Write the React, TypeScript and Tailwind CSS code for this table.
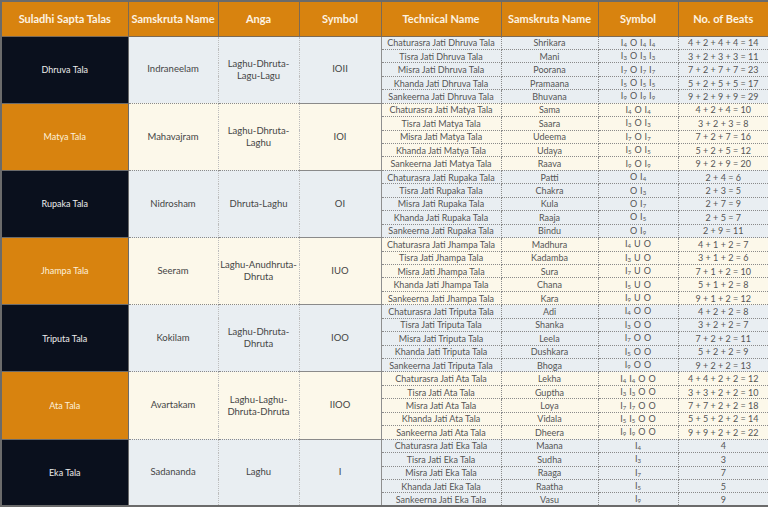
import React from 'react';

type Sub = { tech: string; name: string; sym: (string | number)[]; beats: string };
type Group = { tala: string; name: string; anga: React.ReactNode; symbol: string; dark: boolean; rows: Sub[] };

const jatis: [string, number][] = [
  ['Chaturasra', 4],
  ['Tisra', 3],
  ['Misra', 7],
  ['Khanda', 5],
  ['Sankeerna', 9],
];

// sym pattern: 'L' = laghu with jati count, 'O' = dhrutam, 'U' = anudhrutam
function makeRows(tala: string, names: string[], pattern: string[], extra: number[]): Sub[] {
  return jatis.map(([jati, n], i) => {
    const parts: number[] = [];
    pattern.forEach((p, k) => {
      if (p === 'L') parts.push(n);
      else parts.push(extra[k]);
    });
    const total = parts.reduce((a, b) => a + b, 0);
    return {
      tech: `${jati} Jati ${tala}`,
      name: names[i],
      sym: pattern.map((p) => (p === 'L' ? n : p)),
      beats: parts.length > 1 ? `${parts.join(' + ')} = ${total}` : `${total}`,
    };
  });
}

const groups: Group[] = [
  {
    tala: 'Dhruva Tala',
    name: 'Indraneelam',
    anga: <>Laghu-Dhruta-<br />Lagu-Lagu</>,
    symbol: 'IOII',
    dark: true,
    rows: makeRows('Dhruva Tala', ['Shrikara', 'Mani', 'Poorana', 'Pramaana', 'Bhuvana'], ['L', 'O', 'L', 'L'], [0, 2, 0, 0]),
  },
  {
    tala: 'Matya Tala',
    name: 'Mahavajram',
    anga: <>Laghu-Dhruta-<br />Laghu</>,
    symbol: 'IOI',
    dark: false,
    rows: makeRows('Matya Tala', ['Sama', 'Saara', 'Udeema', 'Udaya', 'Raava'], ['L', 'O', 'L'], [0, 2, 0]),
  },
  {
    tala: 'Rupaka Tala',
    name: 'Nidrosham',
    anga: <>Dhruta-Laghu</>,
    symbol: 'OI',
    dark: true,
    rows: makeRows('Rupaka Tala', ['Patti', 'Chakra', 'Kula', 'Raaja', 'Bindu'], ['O', 'L'], [2, 0]),
  },
  {
    tala: 'Jhampa Tala',
    name: 'Seeram',
    anga: <>Laghu-Anudhruta-<br />Dhruta</>,
    symbol: 'IUO',
    dark: false,
    rows: makeRows('Jhampa Tala', ['Madhura', 'Kadamba', 'Sura', 'Chana', 'Kara'], ['L', 'U', 'O'], [0, 1, 2]),
  },
  {
    tala: 'Triputa Tala',
    name: 'Kokilam',
    anga: <>Laghu-Dhruta-<br />Dhruta</>,
    symbol: 'IOO',
    dark: true,
    rows: makeRows('Triputa Tala', ['Adi', 'Shanka', 'Leela', 'Dushkara', 'Bhoga'], ['L', 'O', 'O'], [0, 2, 2]),
  },
  {
    tala: 'Ata Tala',
    name: 'Avartakam',
    anga: <>Laghu-Laghu-<br />Dhruta-Dhruta</>,
    symbol: 'IIOO',
    dark: false,
    rows: makeRows('Ata Tala', ['Lekha', 'Guptha', 'Loya', 'Vidala', 'Dheera'], ['L', 'L', 'O', 'O'], [0, 0, 2, 2]),
  },
  {
    tala: 'Eka Tala',
    name: 'Sadananda',
    anga: <>Laghu</>,
    symbol: 'I',
    dark: true,
    rows: makeRows('Eka Tala', ['Maana', 'Sudha', 'Raaga', 'Raatha', 'Vasu'], ['L'], [0]),
  },
];

function Symbol({ sym }: { sym: (string | number)[] }) {
  return (
    <span>
      {sym.map((s, i) => (
        <span key={i} className={i > 0 ? 'ml-[3px]' : ''}>
          {typeof s === 'number' ? (
            <>
              I<span className="text-[6px] align-[-1px]">{s}</span>
            </>
          ) : (
            s
          )}
        </span>
      ))}
    </span>
  );
}

const headers = ['Suladhi Sapta Talas', 'Samskruta Name', 'Anga', 'Symbol', 'Technical Name', 'Samskruta Name', 'Symbol', 'No. of Beats'];

export default function App() {
  return (
    <div className="w-[768px] h-[509px] bg-white" style={{ fontFamily: 'Lato, "Liberation Sans", sans-serif' }}>
      <table className="w-[768px] table-fixed border-collapse border-2 border-[#6b6b6b] text-center">
        <colgroup>
          <col className="w-[127px]" />
          <col className="w-[90px]" />
          <col className="w-[81px]" />
          <col className="w-[82px]" />
          <col className="w-[120px]" />
          <col className="w-[97px]" />
          <col className="w-[80px]" />
          <col className="w-[91px]" />
        </colgroup>
        <thead>
          <tr className="h-[35px] bg-[#d8830f]">
            {headers.map((h, i) => (
              <th key={i} className="border border-[#7c6a55] px-0 text-[11px] font-bold text-[#fdf3e2] whitespace-nowrap">
                {h}
              </th>
            ))}
          </tr>
        </thead>
        <tbody>
          {groups.map((g, gi) =>
            g.rows.map((r, ri) => {
              const bg = g.dark ? 'bg-[#e9eef2]' : 'bg-[#fcf8ea]';
              return (
                <tr key={`${gi}-${ri}`} className={`h-[13.45px] ${bg}`}>
                  {ri === 0 && (
                    <>
                      <td
                        rowSpan={5}
                        className={`border border-[#6b6b6b] text-[9px] ${g.dark ? 'bg-[#0a101d] text-[#ececec]' : 'bg-[#d8830f] text-[#fdf1dc]'}`}
                      >
                        {g.tala}
                      </td>
                      <td rowSpan={5} className="border-b border-dotted border-b-[#8a8a8a] border-r border-r-[#bdbdbd] border-dashed text-[9.5px] text-[#454545]">
                        {g.name}
                      </td>
                      <td rowSpan={5} className="border-b border-dotted border-b-[#8a8a8a] border-r border-r-[#bdbdbd] border-dashed text-[9.5px] leading-[12px] text-[#454545]">
                        {g.anga}
                      </td>
                      <td rowSpan={5} className="border-b border-dotted border-b-[#8a8a8a] border-r border-solid border-r-[#8f8f8f] text-[9.5px] text-[#454545]">
                        {g.symbol}
                      </td>
                    </>
                  )}
                  <td className="border border-dotted border-[#8a8a8a] p-0 text-[9px] leading-none text-[#555] whitespace-nowrap">{r.tech}</td>
                  <td className="border border-dotted border-[#8a8a8a] p-0 text-[9px] leading-none text-[#555]">{r.name}</td>
                  <td className="border border-dotted border-[#8a8a8a] p-0 text-[9px] leading-none text-[#555]">
                    <Symbol sym={r.sym} />
                  </td>
                  <td className="border border-dotted border-[#8a8a8a] p-0 text-[9px] leading-none text-[#555]">{r.beats}</td>
                </tr>
              );
            })
          )}
        </tbody>
      </table>
    </div>
  );
}
